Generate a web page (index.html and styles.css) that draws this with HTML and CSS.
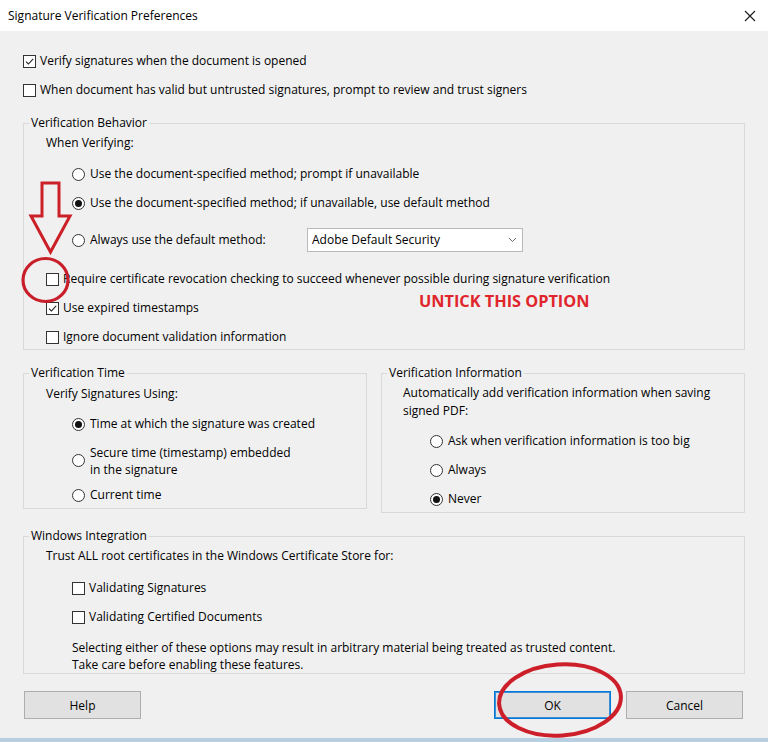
FILE: index.html
```html
<!DOCTYPE html>
<html>
<head>
<meta charset="utf-8">
<title>Signature Verification Preferences</title>
<link rel="stylesheet" href="styles.css">
</head>
<body>
<div class="dialog">
  <div class="titlebar">
    <span class="title">Signature Verification Preferences</span>
    <svg class="close" width="12" height="12" viewBox="0 0 12 12"><path d="M1 1L11 11M11 1L1 11" stroke="#1a1a1a" stroke-width="1.1" fill="none"/></svg>
  </div>
  <div class="content">
    <div class="row r-first"><span class="cb"><svg viewBox="0 0 11 11" width="11" height="11"><path d="M2 5.6L4.4 8L9.2 2.8" stroke="#222" stroke-width="1.1" fill="none"/></svg></span><span>Verify signatures when the document is opened</span></div>
    <div class="row r-gap9"><span class="cb"></span><span>When document has valid but untrusted signatures, prompt to review and trust signers</span></div>

    <fieldset class="group g1">
      <legend>Verification Behavior</legend>
      <div class="inner">
        <div class="row r-gap2">When Verifying:</div>
        <div class="indent">
          <div class="row r-gap11"><span class="rb"></span><span>Use the document-specified method; prompt if unavailable</span></div>
          <div class="row r-gap9"><span class="rb on"></span><span>Use the document-specified method; if unavailable, use default method</span></div>
          <div class="row tall r-gap15"><span class="rb"></span><span class="method-label">Always use the default method:</span>
            <div class="select"><span>Adobe Default Security</span><svg width="9" height="6" viewBox="0 0 9 6"><path d="M1 1L4.5 4.5L8 1" stroke="#666" stroke-width="1" fill="none"/></svg></div>
          </div>
        </div>
        <div class="row r-gap17"><span class="cb"></span><span>Require certificate revocation checking to succeed whenever possible during signature verification</span></div>
        <div class="row r-gap9"><span class="cb"><svg viewBox="0 0 11 11" width="11" height="11"><path d="M2 5.6L4.4 8L9.2 2.8" stroke="#222" stroke-width="1.1" fill="none"/></svg></span><span>Use expired timestamps</span></div>
        <div class="row r-gap9 pb2"><span class="cb"></span><span>Ignore document validation information</span></div>
      </div>
    </fieldset>

    <div class="pair">
      <fieldset class="group g-time">
        <legend>Verification Time</legend>
        <div class="inner">
          <div class="row r-gap3">Verify Signatures Using:</div>
          <div class="indent">
            <div class="row r-gap10"><span class="rb on"></span><span>Time at which the signature was created</span></div>
            <div class="row two r-gap9"><span class="rb"></span><span class="lines">Secure time (timestamp) embedded<br>in the signature</span></div>
            <div class="row r-gap7 pb3"><span class="rb"></span><span>Current time</span></div>
          </div>
        </div>
      </fieldset>
      <fieldset class="group g-info">
        <legend>Verification Information</legend>
        <div class="inner inner-info">
          <div class="para r-gap3">Automatically add verification information when saving<br>signed PDF:</div>
          <div class="indent indent-info">
            <div class="row r-gap11"><span class="rb"></span><span>Ask when verification information is too big</span></div>
            <div class="row r-gap9"><span class="rb"></span><span>Always</span></div>
            <div class="row r-gap9 pb3"><span class="rb on"></span><span>Never</span></div>
          </div>
        </div>
      </fieldset>
    </div>

    <fieldset class="group g-win">
      <legend>Windows Integration</legend>
      <div class="inner">
        <div class="row r-gap2">Trust ALL root certificates in the Windows Certificate Store for:</div>
        <div class="indent">
          <div class="row r-gap12"><span class="cb"></span><span>Validating Signatures</span></div>
          <div class="row r-gap9"><span class="cb"></span><span>Validating Certified Documents</span></div>
          <div class="note r-gap12">Selecting either of these options may result in arbitrary material being treated as trusted content.<br>Take care before enabling these features.</div>
        </div>
      </div>
    </fieldset>

    <div class="buttons">
      <div class="btn">Help</div>
      <div class="spacer"></div>
      <div class="btn default">OK</div>
      <div class="btn">Cancel</div>
    </div>
  </div>
  <div class="edge"></div>

  <svg class="annot" width="768" height="742" viewBox="0 0 768 742">
    <path d="M42 183H59V216H70L50.5 252L31 216H42Z" fill="none" stroke="#cc2029" stroke-width="3" stroke-linejoin="miter"/>
    <ellipse cx="45.5" cy="280" rx="22.5" ry="21.5" fill="none" stroke="#c81f2a" stroke-width="3.2"/>
    <ellipse cx="560" cy="700" rx="61" ry="35.5" transform="rotate(-4 560 700)" fill="none" stroke="#cc1f2a" stroke-width="4"/>
  </svg>
  <div class="untick">UNTICK THIS OPTION</div>
</div>
</body>
</html>
```

FILE: styles.css
```css
* { box-sizing: border-box; }
html, body { margin: 0; padding: 0; }
body {
  width: 768px;
  height: 742px;
  overflow: hidden;
  font-family: "Open Sans", "Noto Sans", sans-serif;
  font-size: 12px;
  color: #000;
  background: #f0f0f0;
}
.dialog { position: relative; width: 768px; height: 742px; }

.titlebar {
  height: 31px;
  background: #fff;
  display: flex;
  align-items: center;
  justify-content: space-between;
  padding: 0 12px 0 8px;
}
.title { font-size: 12px; line-height: 16px; }
.close { display: block; }

.content {
  height: 707px;
  background: #f0f0f0;
  padding: 0 23px;
  display: flex;
  flex-direction: column;
}
.edge { height: 4px; background: #b7cfe0; }

.row {
  display: flex;
  align-items: center;
  gap: 4px;
  height: 20px;
  line-height: 20px;
  white-space: nowrap;
}
.row.tall { height: 24px; }
.row.two { height: 35px; }
.lines { line-height: 17px; }
.para { line-height: 18px; white-space: nowrap; }
.note { line-height: 17px; white-space: nowrap; }

.r-first { margin-top: 20px; }
.r-gap2 { margin-top: 2px; }
.r-gap3 { margin-top: 3px; }
.r-gap7 { margin-top: 7px; }
.r-gap9 { margin-top: 9px; }
.r-gap10 { margin-top: 10px; }
.r-gap11 { margin-top: 11px; }
.r-gap12 { margin-top: 12px; }
.r-gap15 { margin-top: 15px; }
.r-gap17 { margin-top: 17px; }
.pb2 { margin-bottom: 2px; }
.pb3 { margin-bottom: 3px; }

.cb {
  width: 13px;
  height: 13px;
  flex: none;
  border: 1px solid #333;
  background: #fff;
  display: flex;
  align-items: center;
  justify-content: center;
}
.cb svg { display: block; }

.rb {
  width: 13px;
  height: 13px;
  flex: none;
  border: 1px solid #333;
  border-radius: 50%;
  background: #fff;
  display: flex;
  align-items: center;
  justify-content: center;
  margin-right: 1px;
}
.rb.on::after {
  content: "";
  width: 7px;
  height: 7px;
  border-radius: 50%;
  background: #111;
}

.group {
  margin: 15px 0 0 0;
  padding: 0;
  border: 1px solid #d9d9d9;
  min-width: 0;
}
.group.g1 { margin-top: 15px; }
.group legend {
  margin-left: 5px;
  padding: 0 2px;
  line-height: 16px;
  font-size: 12px;
}
.inner { padding-left: 22px; display: flex; flex-direction: column; }
.inner-info { padding-left: 21px; }
.indent { padding-left: 26px; display: flex; flex-direction: column; }
.indent-info { padding-left: 27px; }

.method-label { width: 213px; }
.select {
  width: 216px;
  height: 24px;
  border: 1px solid #b9b9b9;
  background: #fff;
  display: flex;
  align-items: center;
  justify-content: space-between;
  padding: 0 5px 0 4px;
}
.select svg { display: block; }

.pair {
  display: flex;
  gap: 14px;
  align-items: flex-start;
  margin-top: 15px;
}
.pair .group { margin-top: 0; }
.g-time { width: 344px; flex: none; }
.g-info { flex: 1; }

.buttons {
  display: flex;
  gap: 15px;
  margin-top: 17px;
  padding: 0 2px 0 1px;
}
.spacer { flex: 1; }
.btn {
  width: 117px;
  height: 28px;
  background: #e1e1e1;
  border: 1px solid #adadad;
  display: flex;
  align-items: center;
  justify-content: center;
  font-size: 12px;
}
.btn.default {
  border: 1px solid #0078d7;
  box-shadow: inset 0 0 0 1px #3d8fd6;
}

.annot { position: absolute; left: 0; top: 0; pointer-events: none; }
.untick {
  position: absolute;
  left: 419px;
  top: 289px;
  font-family: "Open Sans", "Noto Sans", sans-serif;
  font-weight: 700;
  font-size: 16.3px;
  line-height: 24px;
  color: #e0262c;
  white-space: nowrap;
}
```
